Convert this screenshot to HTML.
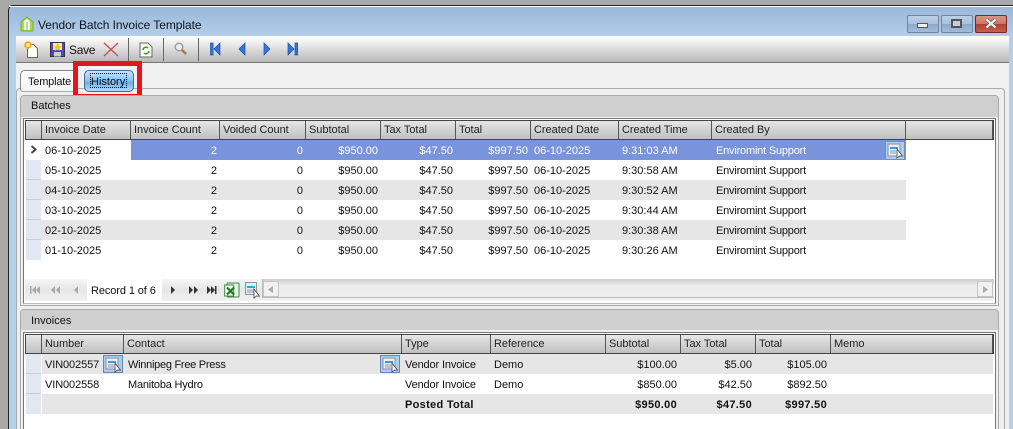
<!DOCTYPE html>
<html><head><meta charset="utf-8"><style>
html,body{margin:0;padding:0}
body{width:1013px;height:429px;overflow:hidden;position:relative;background:#a9a9a9;font:11px/22px "Liberation Sans",sans-serif;color:#111}
div,span,svg{position:absolute;box-sizing:border-box}
.t{white-space:nowrap}
.r{text-align:right}
.b{font-weight:bold;letter-spacing:.3px}
.n{letter-spacing:-.14px}
.e{left:716px;letter-spacing:-.2px}
.k{left:622px}
.h{top:1px;height:18px;border-right:1px solid #555;background:linear-gradient(#e6e6e6,#c0c0c0);line-height:18px;padding-left:3px;color:#222;white-space:nowrap;letter-spacing:-.03px}
.w{color:#fff}
</style></head><body>
<!-- window -->
<div style="left:8px;top:5px;width:1005px;height:424px;background:linear-gradient(#9ab7d8,#b4cfea 32px);border-left:1px solid #222;border-top:1px solid #222;border-top-left-radius:5px"></div>
<div style="left:9px;top:6px;width:1004px;height:1px;background:#fff"></div>
<div style="left:0;top:0;width:1013px;height:5px;background:#a9a9a9"></div>
<div style="left:1009px;top:36px;width:4px;height:393px;background:#b4cfea"></div>
<div style="left:10px;top:36px;width:6px;height:393px;background:#b4cfea"></div>
<!-- title -->
<svg style="left:20px;top:16px" width="14" height="16" viewBox="0 0 14 16"><path d="M1 15V6L7 1l6 5v9H1z" fill="#a8d84c" stroke="#79b030"/><path d="M5 14V6a2 2 0 0 1 4 0v8" fill="#fff" stroke="#fff" stroke-width="1.4"/><path d="M7 6v8" stroke="#79b030"/></svg>
<div class="t" style="left:38px;top:14px;font-size:12px;color:#0c1420;letter-spacing:-.06px">Vendor Batch Invoice Template</div>
<!-- window buttons -->
<div style="left:907px;top:15px;width:32px;height:18px;border:1px solid #6d84a6;border-radius:2px;background:linear-gradient(#bdd0e6,#a9c1dc 50%,#8ea9c8 50%,#a4bcd6)"></div>
<div style="left:917px;top:23px;width:11px;height:5px;background:#f0f0f0;border:1px solid #555"></div>
<div style="left:941px;top:15px;width:32px;height:18px;border:1px solid #6d84a6;border-radius:2px;background:linear-gradient(#bdd0e6,#a9c1dc 50%,#8ea9c8 50%,#a4bcd6)"></div>
<div style="left:951px;top:19px;width:11px;height:9px;background:#c4d0e0;border:2px solid #555"></div>
<div style="left:975px;top:15px;width:32px;height:18px;border:1px solid #6a2a3a;border-radius:2px;background:linear-gradient(#d99484,#cc7666 50%,#b83b2b 50%,#c4604e)"></div>
<svg style="left:984px;top:18px" width="14" height="11" viewBox="0 0 14 11"><path d="M2.500 1.500l9 8M11.500 1.500l-9 8" stroke="#555" stroke-width="3.600"/><path d="M2.500 1.500l9 8M11.500 1.500l-9 8" stroke="#eee" stroke-width="2.200"/></svg>
<!-- toolbar -->
<div style="left:16px;top:36px;width:993px;height:27px;background:linear-gradient(#fff,#f2f2f2 20%,#b8b8b8);border-bottom:1px solid #777"></div>
<svg style="left:23px;top:40px" width="16" height="18" viewBox="0 0 16 18"><path d="M4.500 4.500h6l4 4v9h-10z" fill="#fffef4" stroke="#666"/><circle cx="5" cy="5" r="3.800" fill="#f3a71e"/><circle cx="5" cy="5" r="2" fill="#ffe680"/></svg>
<svg style="left:50px;top:42px" width="15" height="15" viewBox="0 0 15 15"><rect x=".5" y=".5" width="14" height="14" fill="#4b4db4" stroke="#334"/><rect x="3" y="1" width="9" height="7" fill="#f6e9a0"/><path d="M7.500 1.500l1.400 2.600 2.600.4-2 1.700.5 2.600-2.500-1.300-2.500 1.300.5-2.600-2-1.700 2.600-.4z" fill="#f4c520"/><rect x="4" y="10" width="7" height="4.500" fill="#ccd"/></svg>
<div class="t" style="left:69px;top:39px;color:#111;font-size:12px;letter-spacing:-.3px">Save</div>
<svg style="left:103px;top:42px" width="16" height="15" viewBox="0 0 16 15"><path d="M1 1l14 13M15 1L1 14" stroke="#c9504a" stroke-width="1.300"/></svg>
<div style="left:128px;top:38px;width:1px;height:23px;background:#666"></div>
<svg style="left:139px;top:42px" width="14" height="16" viewBox="0 0 14 16"><path d="M1 1h8l4 4v10H1z" fill="#fffef4" stroke="#666"/><path d="M4 8a3 3 0 0 1 5-2M10 9a3 3 0 0 1-5 2" fill="none" stroke="#3c9a2e" stroke-width="1.500"/></svg>
<div style="left:163px;top:38px;width:1px;height:23px;background:#666"></div>
<svg style="left:174px;top:42px" width="13" height="13" viewBox="0 0 13 13"><circle cx="5" cy="5" r="3.800" fill="#e6eef2" stroke="#999" stroke-width="1.400"/><path d="M8 8l4 4" stroke="#b07a2a" stroke-width="2.400"/></svg>
<div style="left:198px;top:38px;width:1px;height:23px;background:#666"></div>
<svg style="left:209px;top:42px" width="104" height="14" viewBox="0 0 104 14"><g fill="#3476d6" stroke="#1d4fa8" stroke-width=".7"><rect x="1.500" y="1" width="2.600" height="12"/><path d="M11 1v12L5 7z"/><path d="M36 1v12l-6-6z"/><path d="M55 1v12l6-6z"/><path d="M79 1v12l6-6z"/><rect x="86" y="1" width="2.600" height="12"/></g></svg>
<!-- tabs area -->
<div style="left:16px;top:63px;width:993px;height:366px;background:#f0f0f0"></div>
<div style="left:16px;top:88px;width:989px;height:341px;border:1px solid #aaa;border-bottom:0;border-radius:4px 4px 0 0;background:#efefef"></div>
<div style="left:20px;top:70px;width:58px;height:22px;background:linear-gradient(#fff,#f3f3f3);border:1px solid #888;border-bottom-color:#aaa;border-radius:5px 5px 3px 3px"></div>
<div class="t" style="left:28px;top:71px;color:#111;letter-spacing:-.2px">Template</div>
<div style="left:84px;top:70px;width:50px;height:22px;background:linear-gradient(#c8e4fc,#8cc3f4 45%,#6cb0ee 60%,#b4dcfa);border:1px solid #4a6a94;border-radius:5px"></div>
<div style="left:90px;top:73px;width:37px;height:15px;border:1px dotted #111"></div>
<div class="t" style="left:91px;top:71px;color:#111">History</div>
<div style="left:73px;top:61px;width:69px;height:38px;border:5px solid #e8141c"></div>
<!-- batches panel -->
<div style="left:20px;top:95px;width:979px;height:211px;border:1px solid #aaa;border-radius:4px 4px 0 0;background:#efefef"></div>
<div style="left:21px;top:96px;width:977px;height:21px;background:#cfcfcf;border-radius:3px 3px 0 0"></div>
<div class="t" style="left:31px;top:95px">Batches</div>
<div style="left:23px;top:118px;width:973px;height:186px;background:#fff;border:1px solid #777;border-bottom-color:#bbb"></div>
<div style="left:25px;top:120px;width:969px;height:20px;background:#444">
<div class="h" style="left:1px;width:16px"></div>
<div class="h" style="left:17px;width:89px">Invoice Date</div>
<div class="h" style="left:106px;width:89px">Invoice Count</div>
<div class="h" style="left:195px;width:86px">Voided Count</div>
<div class="h" style="left:281px;width:75px">Subtotal</div>
<div class="h" style="left:356px;width:75px">Tax Total</div>
<div class="h" style="left:431px;width:75px">Total</div>
<div class="h" style="left:506px;width:88px">Created Date</div>
<div class="h" style="left:594px;width:93px">Created Time</div>
<div class="h" style="left:687px;width:194px">Created By</div>
<div class="h" style="left:881px;width:87px"></div>
</div>
<!-- batches rows -->
<div style="left:26px;top:140px;width:15px;height:120px;background:#e2e8f2"></div>
<div style="left:26px;top:159px;width:15px;height:1px;background:#c8cdd6"></div>
<div style="left:26px;top:179px;width:15px;height:1px;background:#c8cdd6"></div>
<div style="left:26px;top:199px;width:15px;height:1px;background:#c8cdd6"></div>
<div style="left:26px;top:219px;width:15px;height:1px;background:#c8cdd6"></div>
<div style="left:26px;top:239px;width:15px;height:1px;background:#c8cdd6"></div>
<div style="left:26px;top:140px;width:15px;height:20px;background:#fff"></div>
<svg style="left:30px;top:145px" width="8" height="9" viewBox="0 0 8 9"><path d="M1.500 1l4 3.500-4 3.500" fill="none" stroke="#444" stroke-width="2"/></svg>
<div style="left:131px;top:140px;width:775px;height:20px;background:#7a94dc"></div>
<div style="left:41px;top:180px;width:865px;height:20px;background:#e6e6e6"></div>
<div style="left:41px;top:220px;width:865px;height:20px;background:#e6e6e6"></div>
<div class="t" style="left:45px;top:140px">06-10-2025</div>
<div class="t r w" style="left:131px;top:140px;width:86px">2</div>
<div class="t r w" style="left:220px;top:140px;width:83px">0</div>
<div class="t r w" style="left:306px;top:140px;width:72px">$950.00</div>
<div class="t r w" style="left:381px;top:140px;width:72px">$47.50</div>
<div class="t r w" style="left:456px;top:140px;width:72px">$997.50</div>
<div class="t w" style="left:534px;top:140px">06-10-2025</div>
<div class="t k w" style="top:140px">9:31:03 AM</div>
<div class="t e w" style="top:140px">Enviromint Support</div>
<div class="t" style="left:45px;top:160px">05-10-2025</div>
<div class="t r" style="left:131px;top:160px;width:86px">2</div>
<div class="t r" style="left:220px;top:160px;width:83px">0</div>
<div class="t r" style="left:306px;top:160px;width:72px">$950.00</div>
<div class="t r" style="left:381px;top:160px;width:72px">$47.50</div>
<div class="t r" style="left:456px;top:160px;width:72px">$997.50</div>
<div class="t" style="left:534px;top:160px">06-10-2025</div>
<div class="t k" style="top:160px">9:30:58 AM</div>
<div class="t e" style="top:160px">Enviromint Support</div>
<div class="t" style="left:45px;top:180px">04-10-2025</div>
<div class="t r" style="left:131px;top:180px;width:86px">2</div>
<div class="t r" style="left:220px;top:180px;width:83px">0</div>
<div class="t r" style="left:306px;top:180px;width:72px">$950.00</div>
<div class="t r" style="left:381px;top:180px;width:72px">$47.50</div>
<div class="t r" style="left:456px;top:180px;width:72px">$997.50</div>
<div class="t" style="left:534px;top:180px">06-10-2025</div>
<div class="t k" style="top:180px">9:30:52 AM</div>
<div class="t e" style="top:180px">Enviromint Support</div>
<div class="t" style="left:45px;top:200px">03-10-2025</div>
<div class="t r" style="left:131px;top:200px;width:86px">2</div>
<div class="t r" style="left:220px;top:200px;width:83px">0</div>
<div class="t r" style="left:306px;top:200px;width:72px">$950.00</div>
<div class="t r" style="left:381px;top:200px;width:72px">$47.50</div>
<div class="t r" style="left:456px;top:200px;width:72px">$997.50</div>
<div class="t" style="left:534px;top:200px">06-10-2025</div>
<div class="t k" style="top:200px">9:30:44 AM</div>
<div class="t e" style="top:200px">Enviromint Support</div>
<div class="t" style="left:45px;top:220px">02-10-2025</div>
<div class="t r" style="left:131px;top:220px;width:86px">2</div>
<div class="t r" style="left:220px;top:220px;width:83px">0</div>
<div class="t r" style="left:306px;top:220px;width:72px">$950.00</div>
<div class="t r" style="left:381px;top:220px;width:72px">$47.50</div>
<div class="t r" style="left:456px;top:220px;width:72px">$997.50</div>
<div class="t" style="left:534px;top:220px">06-10-2025</div>
<div class="t k" style="top:220px">9:30:38 AM</div>
<div class="t e" style="top:220px">Enviromint Support</div>
<div class="t" style="left:45px;top:240px">01-10-2025</div>
<div class="t r" style="left:131px;top:240px;width:86px">2</div>
<div class="t r" style="left:220px;top:240px;width:83px">0</div>
<div class="t r" style="left:306px;top:240px;width:72px">$950.00</div>
<div class="t r" style="left:381px;top:240px;width:72px">$47.50</div>
<div class="t r" style="left:456px;top:240px;width:72px">$997.50</div>
<div class="t" style="left:534px;top:240px">06-10-2025</div>
<div class="t k" style="top:240px">9:30:26 AM</div>
<div class="t e" style="top:240px">Enviromint Support</div>
<!-- popup button in row -->
<svg style="left:885px;top:141px" width="20" height="19" viewBox="0 0 20 19"><rect x=".5" y=".5" width="19" height="18" fill="#a9cdf0" stroke="#7a8ea8"/><rect x="3" y="3" width="12" height="12" fill="#e8edf4" stroke="#8a94a4"/><path d="M5 7h8" stroke="#29a4e8" stroke-width="2"/><path d="M5 10h6M5 12h6" stroke="#99a"/><path d="M12 8v9l2.500-2 3 .2z" fill="#fff" stroke="#444" stroke-width=".8"/></svg>
<!-- nav bar -->
<div style="left:25px;top:279px;width:969px;height:22px;background:linear-gradient(#f6f6f6,#e6e6e6 50%,#f2f2f2)"></div>
<div style="left:87px;top:279px;width:75px;height:22px;background:#fff"></div>
<div class="t" style="left:91px;top:280px;letter-spacing:-.1px">Record 1 of 6</div>
<svg style="left:29px;top:285px" width="190" height="10" viewBox="0 0 190 10"><g fill="#a8a8a8"><rect x="1" y="1" width="1.500" height="8"/><path d="M7 1v8L3 5zM11 1v8L7 5z"/><path d="M26 1v8l-4-4zM31 1v8l-4-4z"/><path d="M49 1v8l-4-4z"/></g><g fill="#333"><path d="M142 1v8l4-4z"/><path d="M160 1v8l4-4zM165 1v8l4-4z"/><path d="M178 1v8l4-4zM182 1v8l4-4z"/><rect x="186" y="1" width="1.500" height="8"/></g></svg>
<svg style="left:224px;top:282px" width="16" height="16" viewBox="0 0 16 16"><rect x="3" y="1" width="12" height="14" rx="1" fill="#e8f4e8" stroke="#3a8a3a"/><rect x=".7" y="3" width="9" height="11" fill="#fff" stroke="#3a8a3a"/><path d="M3 5.500l7 7M10 5.500l-7 7" stroke="#1f7a1f" stroke-width="2.200"/></svg>
<svg style="left:245px;top:282px" width="16" height="17" viewBox="0 0 16 17"><rect x=".5" y=".5" width="11" height="12" fill="#e8edf4" stroke="#8a94a4"/><path d="M2 5h8" stroke="#29a4e8" stroke-width="2"/><path d="M2 8h7M2 10h7" stroke="#99a"/><path d="M9 7v9l2.500-2 3 .2z" fill="#fff" stroke="#444" stroke-width=".8"/></svg>
<div style="left:262px;top:279px;width:732px;height:19px;background:linear-gradient(#ccc,#ececec 35%,#eee);border-bottom:1px solid #bbb;border-left:1px solid #bbb"></div>
<div style="left:263px;top:281px;width:16px;height:16px;background:#f0f0f0;border:1px solid #c4c4c4"></div>
<svg style="left:268px;top:286px" width="6" height="7"><path d="M5 0v7L0 3.500z" fill="#aaa"/></svg>
<div style="left:977px;top:281px;width:16px;height:16px;background:#f0f0f0;border:1px solid #c4c4c4"></div>
<svg style="left:983px;top:286px" width="6" height="7"><path d="M0 0v7L5 3.500z" fill="#aaa"/></svg>
<!-- invoices panel -->
<div style="left:20px;top:309px;width:979px;height:120px;border:1px solid #aaa;border-bottom:0;border-radius:4px 4px 0 0;background:#efefef"></div>
<div style="left:21px;top:310px;width:977px;height:20px;background:#cfcfcf;border-radius:3px 3px 0 0"></div>
<div class="t" style="left:31px;top:310px">Invoices</div>
<div style="left:23px;top:332px;width:973px;height:97px;background:#fff;border:1px solid #777;border-bottom:0"></div>
<div style="left:25px;top:334px;width:969px;height:20px;background:#444">
<div class="h" style="left:1px;width:16px"></div>
<div class="h" style="left:17px;width:82px">Number</div>
<div class="h" style="left:99px;width:278px">Contact</div>
<div class="h" style="left:377px;width:89px">Type</div>
<div class="h" style="left:466px;width:115px">Reference</div>
<div class="h" style="left:581px;width:75px">Subtotal</div>
<div class="h" style="left:656px;width:75px">Tax Total</div>
<div class="h" style="left:731px;width:75px">Total</div>
<div class="h" style="left:806px;width:162px">Memo</div>
</div>
<div style="left:26px;top:354px;width:15px;height:60px;background:#e2e8f2"></div>
<div style="left:26px;top:373px;width:15px;height:1px;background:#c8cdd6"></div>
<div style="left:26px;top:393px;width:15px;height:1px;background:#c8cdd6"></div>
<div style="left:42px;top:354px;width:951px;height:20px;background:#e6e6e6"></div>
<div style="left:42px;top:394px;width:951px;height:20px;background:#e6e6e6"></div>
<div class="t" style="left:45px;top:354px;letter-spacing:-.1px">VIN002557</div>
<div class="t" style="left:128px;top:354px;letter-spacing:-.27px">Winnipeg Free Press</div>
<div class="t n" style="left:405px;top:354px">Vendor Invoice</div>
<div class="t" style="left:494px;top:354px">Demo</div>
<div class="t r" style="left:606px;top:354px;width:71px">$100.00</div>
<div class="t r" style="left:681px;top:354px;width:71px">$5.00</div>
<div class="t r" style="left:756px;top:354px;width:71px">$105.00</div>
<div class="t" style="left:45px;top:374px;letter-spacing:-.1px">VIN002558</div>
<div class="t" style="left:128px;top:374px;letter-spacing:-.2px">Manitoba Hydro</div>
<div class="t n" style="left:405px;top:374px">Vendor Invoice</div>
<div class="t" style="left:494px;top:374px">Demo</div>
<div class="t r" style="left:606px;top:374px;width:71px">$850.00</div>
<div class="t r" style="left:681px;top:374px;width:71px">$42.50</div>
<div class="t r" style="left:756px;top:374px;width:71px">$892.50</div>
<div class="t b" style="left:405px;top:394px">Posted Total</div>
<div class="t r b" style="left:606px;top:394px;width:71px">$950.00</div>
<div class="t r b" style="left:681px;top:394px;width:71px">$47.50</div>
<div class="t r b" style="left:756px;top:394px;width:71px">$997.50</div>
<svg style="left:103px;top:355px" width="20" height="18" viewBox="0 0 20 18"><rect x=".5" y=".5" width="19" height="17" fill="#a9cdf0" stroke="#6a86b4"/><rect x="3" y="3" width="12" height="11" fill="#e8edf4" stroke="#8a94a4"/><path d="M5 7h8" stroke="#29a4e8" stroke-width="2"/><path d="M5 10h6M5 12h6" stroke="#99a"/><path d="M12 8v9l2.500-2 3 .2z" fill="#fff" stroke="#444" stroke-width=".8"/></svg>
<svg style="left:380px;top:355px" width="20" height="18" viewBox="0 0 20 18"><rect x=".5" y=".5" width="19" height="17" fill="#a9cdf0" stroke="#6a86b4"/><rect x="3" y="3" width="12" height="11" fill="#e8edf4" stroke="#8a94a4"/><path d="M5 7h8" stroke="#29a4e8" stroke-width="2"/><path d="M5 10h6M5 12h6" stroke="#99a"/><path d="M12 8v9l2.500-2 3 .2z" fill="#fff" stroke="#444" stroke-width=".8"/></svg>
</body></html>
